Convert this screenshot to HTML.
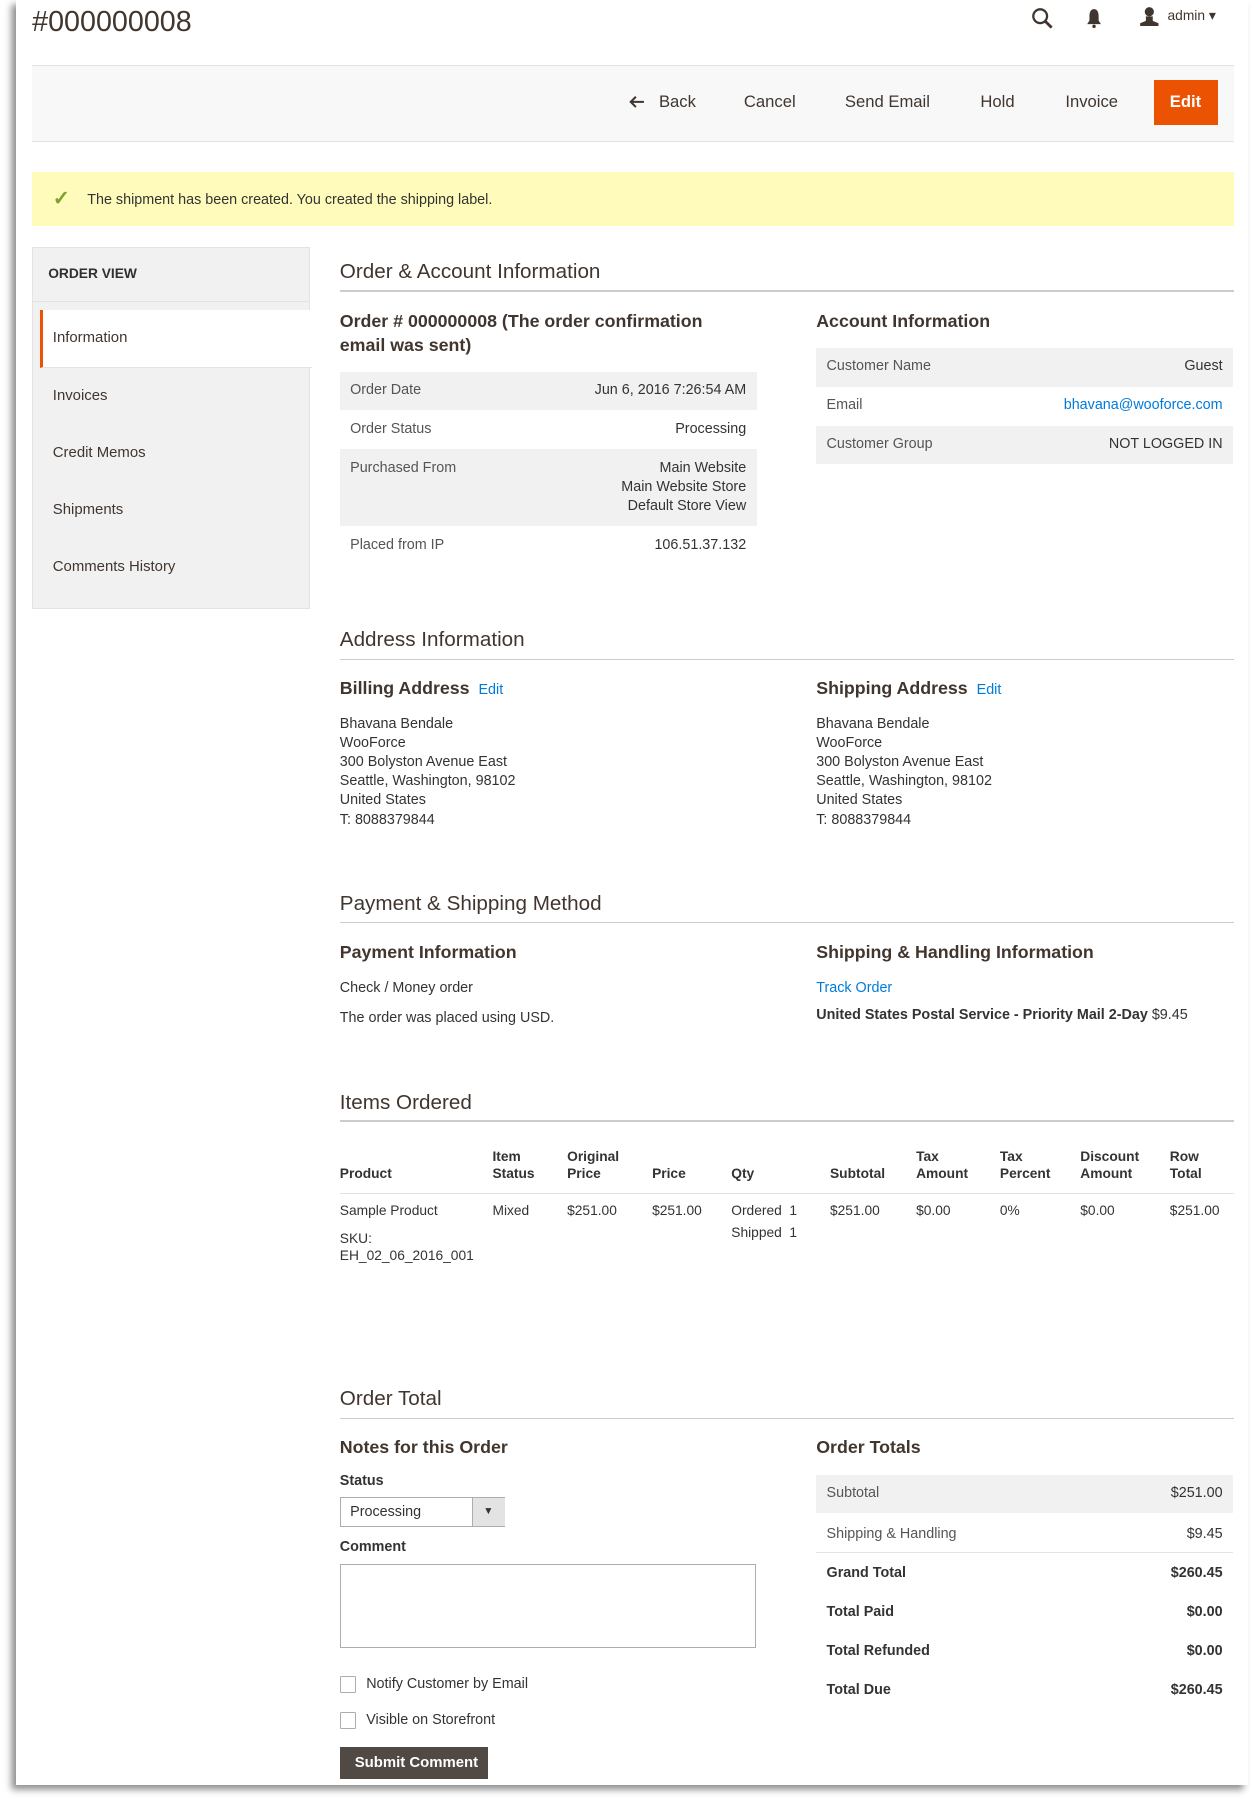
<!DOCTYPE html>
<html><head><meta charset="utf-8"><style>
html,body{margin:0;padding:0;background:#fff;}
body{width:1255px;height:1799px;overflow:hidden;}
#w{zoom:1.148;position:relative;width:1093px;height:1567px;font-family:"Liberation Sans",sans-serif;color:#333;font-size:12.5px;}
#page{position:absolute;left:14px;top:0;width:1073px;height:1555px;background:#fff;box-shadow:-4px 4px 6px rgba(0,0,0,.45);}
.a{position:absolute;white-space:nowrap;line-height:16px;}
.bg{position:absolute;}
.h2{position:absolute;font-size:18px;color:#41362f;line-height:20px;}
.ln{position:absolute;height:1px;background:#ccc;}
.h3{position:absolute;font-size:15.5px;font-weight:bold;color:#41362f;line-height:21px;white-space:nowrap;}
.g{background:#f1f1f1;}
.lbl{color:#555;}
.r{text-align:right;}
.b{font-weight:bold;}
.lk{color:#007bdb;}
.btn{position:absolute;font-size:14.5px;color:#41362f;line-height:18px;white-space:nowrap;}
.th{font-weight:bold;font-size:12px;line-height:15px;}
</style></head><body><div id="w">
<div id="page"></div>
<div class="a" style="left:28px;top:5px;font-size:25px;line-height:28px;color:#41362f">#000000008</div>
<svg class="a" style="left:898px;top:6px" width="20" height="20" viewBox="0 0 20 20"><circle cx="8" cy="8" r="6" fill="none" stroke="#41362f" stroke-width="2"/><path d="M12.5 12.5L18 18" stroke="#41362f" stroke-width="2.5"/></svg>
<svg class="a" style="left:946px;top:7px" width="14" height="18" viewBox="0 0 14 18"><path d="M7 1C4 1 3 4 3 7v4L1 14h12l-2-3V7c0-3-1-6-4-6z" fill="#41362f"/><circle cx="7" cy="16" r="1.5" fill="#41362f"/></svg>
<svg class="a" style="left:992px;top:5px" width="18" height="18" viewBox="0 0 18 18"><circle cx="9" cy="5" r="4" fill="#41362f"/><path d="M6 9h6v4l5 2v3H1v-3l5-2z" fill="#41362f"/></svg>
<div class="a" style="left:1017px;top:6px;font-size:12px;color:#41362f">admin ▾</div>
<div class="bg" style="left:28px;top:57px;width:1047px;height:65px;background:#f8f8f8;border-top:1px solid #e3e3e3;border-bottom:1px solid #e3e3e3"></div>
<svg class="a" style="left:548px;top:83px" width="14" height="12" viewBox="0 0 14 12"><path d="M13 6H2M6 1.5L1.5 6L6 10.5" fill="none" stroke="#41362f" stroke-width="1.8"/></svg>
<div class="btn" style="left:574px;top:80px">Back</div>
<div class="btn" style="left:648px;top:80px">Cancel</div>
<div class="btn" style="left:736px;top:80px">Send Email</div>
<div class="btn" style="left:854px;top:80px">Hold</div>
<div class="btn" style="left:928px;top:80px">Invoice</div>
<div class="bg" style="left:1005px;top:70px;width:56px;height:39px;background:#eb5202"></div>
<div class="btn" style="left:1019px;top:80px;color:#fff;font-weight:bold">Edit</div>
<div class="bg" style="left:28px;top:150px;width:1047px;height:47px;background:#fffbbb"></div>
<div class="a" style="left:46px;top:164px;color:#79a22e;font-size:18px;font-weight:bold;line-height:20px">✓</div>
<div class="a" style="left:76px;top:166px;font-size:12.5px">The shipment has been created. You created the shipping label.</div>
<div class="bg g" style="left:28px;top:215px;width:240px;height:314px;border:1px solid #e3e3e3"></div>
<div class="bg" style="left:29px;top:262px;width:240px;height:1px;background:#e3e3e3"></div>
<div class="a b" style="left:42px;top:231px;font-size:12px;color:#303030">ORDER VIEW</div>
<div class="bg" style="left:35px;top:270px;width:234px;height:50px;background:#fff;border-left:3px solid #eb5202;border-bottom:1px solid #e3e3e3"></div>
<div class="a" style="left:46px;top:287px;font-size:13px;color:#41362f">Information</div>
<div class="a" style="left:46px;top:337px;font-size:13px;color:#41362f">Invoices</div>
<div class="a" style="left:46px;top:387px;font-size:13px;color:#41362f">Credit Memos</div>
<div class="a" style="left:46px;top:436px;font-size:13px;color:#41362f">Shipments</div>
<div class="a" style="left:46px;top:486px;font-size:13px;color:#41362f">Comments History</div>

<div class="h2" style="left:296px;top:227px">Order &amp; Account Information</div><div class="ln" style="left:296px;top:253px;width:779px"></div>
<div class="h3" style="left:296px;top:269px">Order # 000000008 (The order confirmation<br>email was sent)</div>
<div class="bg g" style="left:296px;top:324px;width:363px;height:33px"></div>
<div class="bg g" style="left:296px;top:391px;width:363px;height:67px"></div>
<div class="a lbl" style="left:305px;top:332px">Order Date</div><div class="a r" style="right:443px;top:332px">Jun 6, 2016 7:26:54 AM</div>
<div class="a lbl" style="left:305px;top:366px">Order Status</div><div class="a r" style="right:443px;top:366px">Processing</div>
<div class="a lbl" style="left:305px;top:400px">Purchased From</div><div class="a r" style="right:443px;top:400px;line-height:16.5px">Main Website<br>Main Website Store<br>Default Store View</div>
<div class="a lbl" style="left:305px;top:467px">Placed from IP</div><div class="a r" style="right:443px;top:467px">106.51.37.132</div>
<div class="h3" style="left:711px;top:269px">Account Information</div>
<div class="bg g" style="left:711px;top:303px;width:363px;height:34px"></div>
<div class="bg g" style="left:711px;top:371px;width:363px;height:33px"></div>
<div class="a lbl" style="left:720px;top:311px">Customer Name</div><div class="a r" style="right:28px;top:311px">Guest</div>
<div class="a lbl" style="left:720px;top:345px">Email</div><div class="a r lk" style="right:28px;top:345px">bhavana@wooforce.com</div>
<div class="a lbl" style="left:720px;top:379px">Customer Group</div><div class="a r" style="right:28px;top:379px">NOT LOGGED IN</div>

<div class="h2" style="left:296px;top:548px">Address Information</div><div class="ln" style="left:296px;top:574px;width:779px"></div>
<div class="h3" style="left:296px;top:589px">Billing Address <span class="lk" style="font-size:12.5px;font-weight:normal">&nbsp;Edit</span></div>
<div class="a" style="left:296px;top:623px;line-height:16.6px">Bhavana Bendale<br>WooForce<br>300 Bolyston Avenue East<br>Seattle, Washington, 98102<br>United States<br>T: 8088379844</div>
<div class="h3" style="left:711px;top:589px">Shipping Address <span class="lk" style="font-size:12.5px;font-weight:normal">&nbsp;Edit</span></div>
<div class="a" style="left:711px;top:623px;line-height:16.6px">Bhavana Bendale<br>WooForce<br>300 Bolyston Avenue East<br>Seattle, Washington, 98102<br>United States<br>T: 8088379844</div>

<div class="h2" style="left:296px;top:778px">Payment &amp; Shipping Method</div><div class="ln" style="left:296px;top:803px;width:779px"></div>
<div class="h3" style="left:296px;top:819px">Payment Information</div>
<div class="a" style="left:296px;top:853px">Check / Money order</div>
<div class="a" style="left:296px;top:879px">The order was placed using USD.</div>
<div class="h3" style="left:711px;top:819px">Shipping &amp; Handling Information</div>
<div class="a lk" style="left:711px;top:853px">Track Order</div>
<div class="a" style="left:711px;top:876px"><b>United States Postal Service - Priority Mail 2-Day</b> $9.45</div>

<div class="h2" style="left:296px;top:951px">Items Ordered</div><div class="ln" style="left:296px;top:976px;width:779px"></div>
<div class="a th" style="left:296px;top:1015px">Product</div>
<div class="a th" style="left:429px;top:1000px">Item<br>Status</div>
<div class="a th" style="left:494px;top:1000px">Original<br>Price</div>
<div class="a th" style="left:568px;top:1015px">Price</div>
<div class="a th" style="left:637px;top:1015px">Qty</div>
<div class="a th" style="left:723px;top:1015px">Subtotal</div>
<div class="a th" style="left:798px;top:1000px">Tax<br>Amount</div>
<div class="a th" style="left:871px;top:1000px">Tax<br>Percent</div>
<div class="a th" style="left:941px;top:1000px">Discount<br>Amount</div>
<div class="a th" style="left:1019px;top:1000px">Row<br>Total</div>
<div class="bg" style="left:296px;top:1039px;width:779px;height:1px;background:#e3e3e3"></div>
<div class="a" style="left:296px;top:1047px;font-size:12px">Sample Product</div>
<div class="a" style="left:296px;top:1071px;font-size:12px;line-height:15px">SKU:<br>EH_02_06_2016_001</div>
<div class="a" style="left:429px;top:1047px;font-size:12px">Mixed</div>
<div class="a" style="left:494px;top:1047px;font-size:12px">$251.00</div>
<div class="a" style="left:568px;top:1047px;font-size:12px">$251.00</div>
<div class="a" style="left:637px;top:1047px;font-size:12px;line-height:19.5px;top:1045px">Ordered&nbsp; 1<br>Shipped&nbsp; 1</div>
<div class="a" style="left:723px;top:1047px;font-size:12px">$251.00</div>
<div class="a" style="left:798px;top:1047px;font-size:12px">$0.00</div>
<div class="a" style="left:871px;top:1047px;font-size:12px">0%</div>
<div class="a" style="left:941px;top:1047px;font-size:12px">$0.00</div>
<div class="a" style="left:1019px;top:1047px;font-size:12px">$251.00</div>

<div class="h2" style="left:296px;top:1209px">Order Total</div><div class="ln" style="left:296px;top:1235px;width:779px"></div>
<div class="h3" style="left:296px;top:1250px">Notes for this Order</div>
<div class="a b" style="left:296px;top:1282px;font-size:12.5px">Status</div>
<div class="bg" style="left:296px;top:1304px;width:142px;height:24px;border:1px solid #adadad;background:#fff"></div>
<div class="bg" style="left:411px;top:1305px;width:28px;height:24px;background:#e3e3e3;border-left:1px solid #adadad"></div>
<div class="a" style="left:421px;top:1309px;font-size:9px">▼</div>
<div class="a" style="left:305px;top:1309px">Processing</div>
<div class="a b" style="left:296px;top:1340px">Comment</div>
<div class="bg" style="left:296px;top:1362px;width:361px;height:72px;border:1px solid #adadad"></div>
<div class="bg" style="left:296px;top:1460px;width:12px;height:13px;border:1px solid #adadad;border-radius:1px"></div>
<div class="a" style="left:319px;top:1459px">Notify Customer by Email</div>
<div class="bg" style="left:296px;top:1491px;width:12px;height:13px;border:1px solid #adadad;border-radius:1px"></div>
<div class="a" style="left:319px;top:1490px">Visible on Storefront</div>
<div class="bg" style="left:296px;top:1522px;width:129px;height:28px;background:#514943"></div>
<div class="a b" style="left:309px;top:1528px;color:#fff;font-size:13px">Submit Comment</div>

<div class="h3" style="left:711px;top:1250px">Order Totals</div>
<div class="bg g" style="left:711px;top:1285px;width:363px;height:33px"></div>
<div class="a lbl" style="left:720px;top:1293px">Subtotal</div><div class="a r" style="right:28px;top:1293px">$251.00</div>
<div class="a lbl" style="left:720px;top:1328px">Shipping &amp; Handling</div><div class="a r" style="right:28px;top:1328px">$9.45</div>
<div class="bg" style="left:711px;top:1352px;width:363px;height:1px;background:#e3e3e3"></div>
<div class="a b" style="left:720px;top:1362px">Grand Total</div><div class="a r b" style="right:28px;top:1362px">$260.45</div>
<div class="a b" style="left:720px;top:1396px">Total Paid</div><div class="a r b" style="right:28px;top:1396px">$0.00</div>
<div class="a b" style="left:720px;top:1430px">Total Refunded</div><div class="a r b" style="right:28px;top:1430px">$0.00</div>
<div class="a b" style="left:720px;top:1464px">Total Due</div><div class="a r b" style="right:28px;top:1464px">$260.45</div>
</div></body></html>
